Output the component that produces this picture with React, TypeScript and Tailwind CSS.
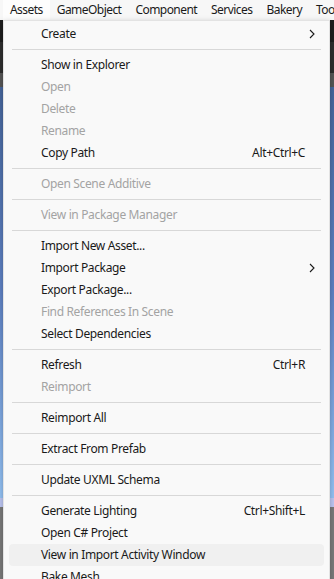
import React from "react";

type Item =
  | { kind: "sep" }
  | { kind: "item"; label: string; disabled?: boolean; shortcut?: string; sub?: boolean; hover?: boolean };

const items: Item[] = [
  { kind: "item", label: "Create", sub: true },
  { kind: "sep" },
  { kind: "item", label: "Show in Explorer" },
  { kind: "item", label: "Open", disabled: true },
  { kind: "item", label: "Delete", disabled: true },
  { kind: "item", label: "Rename", disabled: true },
  { kind: "item", label: "Copy Path", shortcut: "Alt+Ctrl+C" },
  { kind: "sep" },
  { kind: "item", label: "Open Scene Additive", disabled: true },
  { kind: "sep" },
  { kind: "item", label: "View in Package Manager", disabled: true },
  { kind: "sep" },
  { kind: "item", label: "Import New Asset..." },
  { kind: "item", label: "Import Package", sub: true },
  { kind: "item", label: "Export Package..." },
  { kind: "item", label: "Find References In Scene", disabled: true },
  { kind: "item", label: "Select Dependencies" },
  { kind: "sep" },
  { kind: "item", label: "Refresh", shortcut: "Ctrl+R" },
  { kind: "item", label: "Reimport", disabled: true },
  { kind: "sep" },
  { kind: "item", label: "Reimport All" },
  { kind: "sep" },
  { kind: "item", label: "Extract From Prefab" },
  { kind: "sep" },
  { kind: "item", label: "Update UXML Schema" },
  { kind: "sep" },
  { kind: "item", label: "Generate Lighting", shortcut: "Ctrl+Shift+L" },
  { kind: "item", label: "Open C# Project" },
  { kind: "item", label: "View in Import Activity Window", hover: true },
  { kind: "item", label: "Bake Mesh" },
];

const Chevron = () => (
  <svg width="6" height="10" viewBox="0 0 6 10" className="block">
    <path d="M1 1 L5 5 L1 9" fill="none" stroke="#1a1a1a" strokeWidth="1.1" />
  </svg>
);

export default function App() {
  const font = { fontFamily: '"Noto Sans", "Segoe UI", sans-serif' };
  return (
    <div
      className="relative w-[334px] h-[579px] overflow-hidden text-[12px] tracking-[-0.35px]"
      style={font}
    >
      {/* background scene */}
      <div className="flex flex-col w-full h-full">
        <div className="h-[20px] bg-[#f7f7f7]" />
        <div className="h-[22px] bg-[#1e1e1e]" />
        <div className="h-[31px] bg-[#2e2e2e]" />
        <div className="h-[14px] bg-[#565656]" />
        <div className="h-[411px] bg-gradient-to-b from-[#46669c] via-[#5f82c4] to-[#94c2f4]" />
        <div className="h-[9px] bg-[#bcc6f2]" />
        <div className="flex-1 bg-[#7a7a7a]" />
      </div>

      {/* menu bar */}
      <div className="absolute left-0 top-0 w-[334px] h-[20px] flex items-center pl-[3px] bg-[#f7f7f7] text-[#1a1a1a] whitespace-nowrap overflow-hidden tracking-[-0.55px]">
        <div className="h-full flex items-center px-[7px] bg-[#fdfdfd]">Assets</div>
        <div className="h-full flex items-center px-[7px]">GameObject</div>
        <div className="h-full flex items-center px-[7px]">Component</div>
        <div className="h-full flex items-center px-[7px]">Services</div>
        <div className="h-full flex items-center px-[7px]">Bakery</div>
        <div className="h-full flex items-center px-[7px]">Tools</div>
      </div>

      {/* dropdown */}
      <div className="absolute left-[3px] top-[20px] w-[327px] h-[600px] bg-[#f9f9f9] border border-[#e3e3e3] shadow-[0_2px_6px_rgba(0,0,0,0.25)] pt-[2px] px-[5px]">
        {items.map((it, i) =>
          it.kind === "sep" ? (
            <div key={i} className="h-[9px] flex items-center px-[3px]">
              <div className="h-px w-full bg-[#d8d8d8]" />
            </div>
          ) : (
            <div
              key={i}
              className={`h-[22px] flex items-center pl-[32px] pr-[19px] rounded-[4px] whitespace-nowrap ${
                it.hover ? "bg-[#f0f0f0]" : ""
              } ${it.disabled ? "text-[#a3a3a3]" : "text-[#1a1a1a]"}`}
            >
              <span className="flex-1">{it.label}</span>
              {it.shortcut && <span>{it.shortcut}</span>}
              {it.sub && (
                <span className="-mr-[10px]">
                  <Chevron />
                </span>
              )}
            </div>
          )
        )}
      </div>
    </div>
  );
}
